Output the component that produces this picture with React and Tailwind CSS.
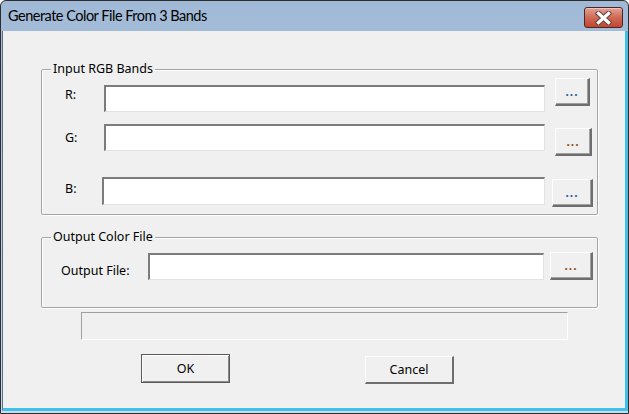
import React from "react";

const ui = { fontFamily: '"Noto Sans", "Open Sans", Arial, sans-serif' };

const Dots = ({ color }) => (
  <span className="text-[12px] font-bold leading-none tracking-[1px]" style={{ color }}>
    ...
  </span>
);

const BrowseBtn = ({ className, color }) => (
  <button
    className={`flex items-center justify-center h-[28px] bg-[#f0f0f0] border-t border-l border-t-white border-l-white border-b-2 border-r-2 border-b-[#6e6e6e] border-r-[#6e6e6e] shadow-[inset_-1px_-1px_0_#a0a0a0] ${className}`}
  >
    <Dots color={color} />
  </button>
);

const Field = ({ className }) => (
  <div
    className={`h-[27px] bg-white border-t-2 border-l-2 border-t-[#7c7c7c] border-l-[#7c7c7c] border-b border-r border-b-[#e3e3e3] border-r-[#e3e3e3] ${className}`}
  />
);

const Group = ({ title, className, children }) => (
  <div
    className={`relative ml-[38px] w-[557px] rounded-[2px] border border-[#a5a5a5] shadow-[1px_1px_0_#ffffff,inset_1px_1px_0_#ffffff] ${className}`}
  >
    <span className="absolute -top-[9px] left-[9px] px-[2px] bg-[#f0f0f0] text-[12.5px] leading-[16px] text-black">
      {title}
    </span>
    {children}
  </div>
);

const CloseX = () => (
  <svg width="17" height="14" viewBox="0 0 17 14">
    <path d="M3.5 2.5 L13.5 11.5 M13.5 2.5 L3.5 11.5" stroke="#6b4a45" strokeWidth="5.5" strokeLinecap="square" />
    <path d="M3.5 2.5 L13.5 11.5 M13.5 2.5 L3.5 11.5" stroke="#ffffff" strokeWidth="3.2" strokeLinecap="square" />
  </svg>
);

const App = () => {
  return (
    <div
      className="w-[629px] h-[414px] flex flex-col border border-[#2d2d2d] rounded-t-[6px] overflow-hidden bg-gradient-to-b from-[#a0b9d6] via-[#b6cce4] to-[#c9dbee]"
      style={ui}
    >
      <div className="h-[30px] flex items-start justify-between pl-[7px] pr-[5px]">
        <div className="mt-[5px] text-[14.5px] leading-[20px] tracking-[-0.5px] text-black font-['Lato',sans-serif]">
          Generate Color File From 3 Bands
        </div>
        <div className="mt-[6px] w-[39px] h-[21px] rounded-[3px] border border-[#4b2626] bg-gradient-to-b from-[#e2a194] via-[#cf6a55] to-[#c2452e] flex items-center justify-center shadow-[inset_0_1px_0_#f0c4ba]">
          <CloseX />
        </div>
      </div>

      <div className="flex-1 flex pl-[1px] pb-[2px]">
        <div className="flex-1 flex flex-col bg-[#f0f0f0] border-l border-l-[#5d6e82] border-r-[3px] border-r-[#3fc0ea] border-b-[3px] border-b-[#3fc0ea]">
          <Group title="Input RGB Bands" className="mt-[38px] h-[146px]">
            <div className="flex items-start mt-[8px]">
              <div className="ml-[23px] w-[39px] mt-[9px] text-[12.5px] leading-[16px]">R:</div>
              <Field className="w-[441px] mt-[7px]" />
              <BrowseBtn className="ml-[10px] w-[35px]" color="#1f5fa8" />
            </div>
            <div className="flex items-start mt-[12px]">
              <div className="ml-[23px] w-[39px] mt-[6px] text-[12.5px] leading-[16px]">G:</div>
              <Field className="w-[441px]" />
              <BrowseBtn className="ml-[10px] mt-[4px] w-[37px]" color="#9a4a14" />
            </div>
            <div className="flex items-start mt-[21px]">
              <div className="ml-[23px] w-[37px] mt-[4px] text-[12.5px] leading-[16px]">B:</div>
              <Field className="w-[443px] h-[28px]" />
              <BrowseBtn className="ml-[7px] mt-[2px] w-[41px]" color="#1f5fa8" />
            </div>
          </Group>

          <Group title="Output Color File" className="mt-[22px] h-[71px]">
            <div className="flex items-start mt-[14px]">
              <div className="ml-[19px] w-[87px] mt-[11px] text-[12.5px] leading-[16px]">Output File:</div>
              <Field className="w-[396px] mt-[1px]" />
              <BrowseBtn className="ml-[6px] w-[43px]" color="#9a4a14" />
            </div>
          </Group>

          <div className="mt-[4px] ml-[78px] w-[487px] h-[28px] border border-t-[#a0a0a0] border-l-[#a0a0a0] border-b-white border-r-white" />

          <div className="flex items-start mt-[14px]">
            <button className="ml-[138px] w-[89px] h-[29px] border border-[#5a5a5a] bg-[#f0f0f0] shadow-[inset_1px_1px_0_#ffffff,inset_-1px_-1px_0_#8a8a8a] text-[12.5px] leading-[16px] text-black">
              OK
            </button>
            <button className="ml-[135px] mt-[2px] w-[89px] h-[28px] bg-[#f0f0f0] border-t border-l border-t-white border-l-white border-b-2 border-r-2 border-b-[#6e6e6e] border-r-[#6e6e6e] text-[12.5px] leading-[16px] text-black">
              Cancel
            </button>
          </div>
        </div>
      </div>
    </div>
  );
};

export default App;
